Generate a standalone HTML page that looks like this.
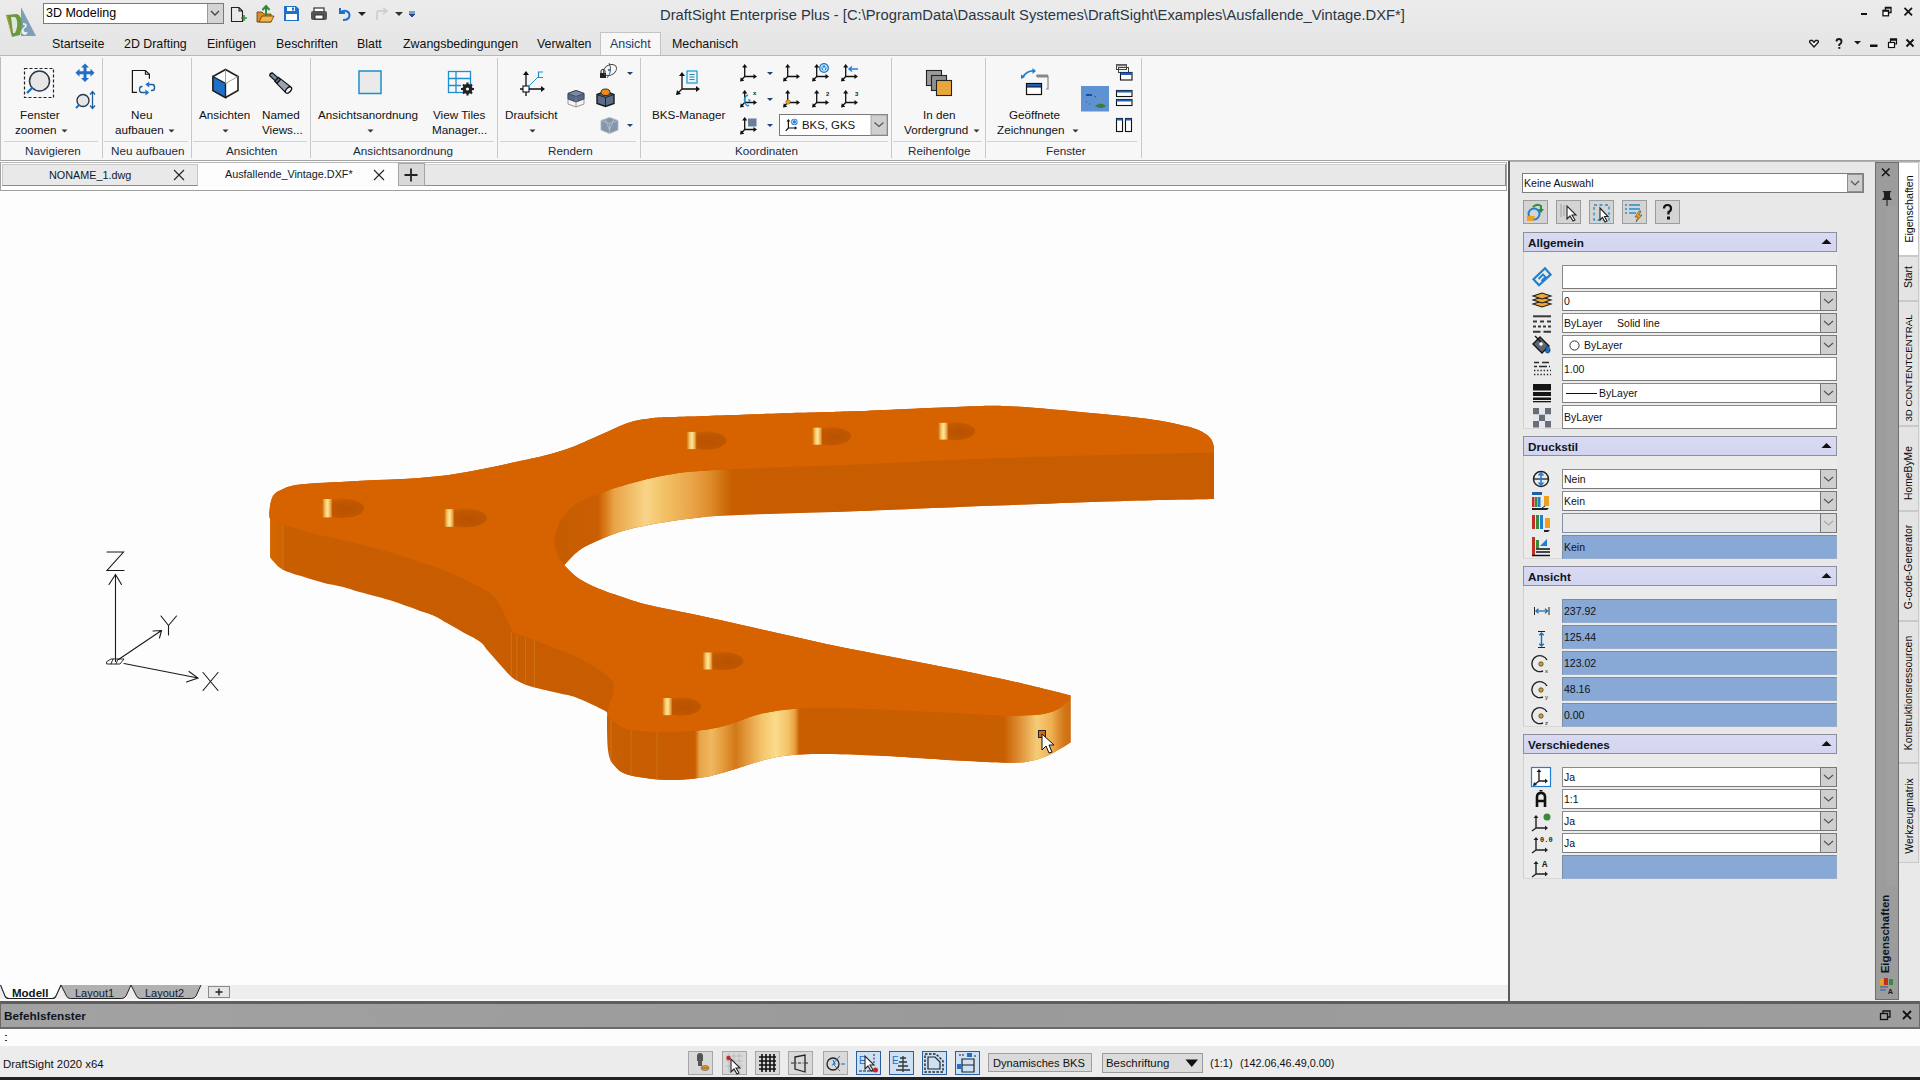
<!DOCTYPE html>
<html><head><meta charset="utf-8">
<style>
*{margin:0;padding:0;box-sizing:border-box}
html,body{width:1920px;height:1080px;overflow:hidden;background:#f0f0f0;font-family:"Liberation Sans",sans-serif;font-size:12px;color:#111}
.a{position:absolute}
.t{position:absolute;white-space:nowrap;line-height:1}
svg.a{overflow:visible}
</style></head><body>
<div class="a" style="left:0;top:0;width:1920px;height:56px;background:linear-gradient(#ececec,#e7e7e7 60%,#e4e4e4)"></div>
<!-- logo -->
<svg class="a" style="left:3px;top:5px" width="36" height="34" viewBox="0 0 36 34">
<path d="M18,2 L33,31 L18,31 Z" fill="#7f9fb5"/>
<path d="M3,10 L14,9 C20,12 20,20 17,30 L9,32 Z" fill="#6b9a3c"/>
<path d="M8,12 L12,12 C15,15 15,22 12,28 L10,28 Z" fill="#dfe6df"/>
<path d="M20,18 C24,18 25,21 22,23 C19,25 21,28 25,27 L23,30 C18,30 17,26 20,23 C23,21 22,19 20,20Z" fill="#e8f0f5"/>
<path d="M4,11 L8,26" stroke="#e0a030" stroke-width="1.2" stroke-dasharray="1.5 1.5"/>
</svg>
<!-- combo -->
<div class="a" style="left:43px;top:3px;width:181px;height:21px;background:#fff;border:1px solid #7a7a7a"></div>
<div class="t" style="left:46px;top:7px;font-size:12.5px;color:#000">3D Modeling</div>
<div class="a" style="left:207px;top:4px;width:16px;height:19px;background:#d4d4d4;border-left:1px solid #9a9a9a"></div>
<svg class="a" style="left:210px;top:10px" width="10" height="7"><path d="M1,1 L5,5 L9,1" fill="none" stroke="#444" stroke-width="1.3"/></svg>
<!-- quick access -->
<svg class="a" style="left:230px;top:6px" width="18" height="17"><path d="M1.5,1.5 H9 L12.5,5 V15.5 H1.5 Z M9,1.5 V5 H12.5" fill="none" stroke="#222" stroke-width="1.1"/><path d="M14,9 V15 M11,12 H17" stroke="#3a8a3a" stroke-width="1.6"/></svg>
<svg class="a" style="left:256px;top:4px" width="19" height="19"><path d="M1,8 H6 L8,10 H15 V18 H1 Z" fill="#e08a1e" stroke="#5a3a10" stroke-width="0.8"/><path d="M3,18 L6,12 H18 L15,18 Z" fill="#f4b547" stroke="#5a3a10" stroke-width="0.8"/><path d="M10,12 V3 M6.5,6 L10,2 L13.5,6" stroke="#2e8b3a" stroke-width="2" fill="none"/></svg>
<svg class="a" style="left:283px;top:5px" width="17" height="17"><path d="M1,1 H13 L16,4 V16 H1 Z" fill="#1f6fc8"/><rect x="4" y="2" width="8" height="4" fill="#fff"/><rect x="9" y="2.5" width="2" height="3" fill="#1f6fc8"/><rect x="3" y="9" width="11" height="6" fill="#fff"/></svg>
<svg class="a" style="left:310px;top:7px" width="18" height="14"><rect x="4" y="1" width="10" height="4" fill="#fff" stroke="#333" stroke-width="1.2"/><path d="M1,6 Q1,4 3,4 H15 Q17,4 17,6 V11 Q17,13 15,13 H3 Q1,13 1,11Z" fill="#555"/><rect x="5" y="8" width="8" height="4" fill="#fff" stroke="#333"/></svg>
<svg class="a" style="left:337px;top:6px" width="15" height="16"><path d="M3,2 V7 H8" fill="none" stroke="#1f6fc8" stroke-width="2"/><path d="M3.5,6.5 C6,4 12,4 12.5,9 C12.5,13 9,14 6,14" fill="none" stroke="#1f6fc8" stroke-width="2"/></svg>
<svg class="a" style="left:358px;top:12px" width="9" height="5"><path d="M0,0 H8 L4,4Z" fill="#222"/></svg>
<svg class="a" style="left:375px;top:7px" width="15" height="14"><path d="M2,13 V6 Q2,4 4,4 H11 M8,1 L12,4 L8,7" fill="none" stroke="#cfcfcf" stroke-width="1.8"/></svg>
<svg class="a" style="left:395px;top:12px" width="9" height="5"><path d="M0,0 H8 L4,4Z" fill="#333"/></svg>
<svg class="a" style="left:408px;top:11px" width="8" height="8"><path d="M1,1 H7 M1,3 H7 L4,6Z" fill="#1f4f8f" stroke="#1f4f8f" stroke-width="1"/></svg>
<div class="t" style="left:660px;top:8px;font-size:14.75px;color:#2a3645">DraftSight Enterprise Plus - [C:\ProgramData\Dassault Systemes\DraftSight\Examples\Ausfallende_Vintage.DXF*]</div>
<!-- window controls -->
<svg class="a" style="left:1858px;top:6px" width="60" height="14">
<rect x="3" y="7" width="6" height="2" fill="#111"/>
<path d="M27.4,4.3 V1.3 H33 V6.5 H30.5" fill="none" stroke="#111" stroke-width="1.3"/><rect x="27.4" y="1.3" width="5.6" height="1.4" fill="#111"/>
<rect x="25" y="4.3" width="5.5" height="5.5" fill="#fff" stroke="#111" stroke-width="1.3"/><rect x="25" y="4.3" width="5.5" height="1.5" fill="#111"/>
<path d="M46.5,1.8 L54,9.3 M54,1.8 L46.5,9.3" stroke="#111" stroke-width="1.7"/>
</svg>
<!-- menu tabs -->
<div class="t" style="left:52px;top:38px;font-size:12.4px;color:#111">Startseite</div>
<div class="t" style="left:124px;top:38px;font-size:12.4px;color:#111">2D Drafting</div>
<div class="t" style="left:207px;top:38px;font-size:12.4px;color:#111">Einfügen</div>
<div class="t" style="left:276px;top:38px;font-size:12.4px;color:#111">Beschriften</div>
<div class="t" style="left:357px;top:38px;font-size:12.4px;color:#111">Blatt</div>
<div class="t" style="left:403px;top:38px;font-size:12.4px;color:#111">Zwangsbedingungen</div>
<div class="t" style="left:537px;top:38px;font-size:12.4px;color:#111">Verwalten</div>
<div class="a" style="left:600px;top:32px;width:61px;height:25px;background:#f7f7f7;border:1px solid #c4c4c4;border-bottom:none"></div>
<div class="t" style="left:610px;top:38px;font-size:12.4px;color:#1a3a6a">Ansicht</div>
<div class="t" style="left:672px;top:38px;font-size:12.4px;color:#111">Mechanisch</div>
<!-- right menu icons -->
<svg class="a" style="left:1805px;top:37px" width="115" height="14">
<path d="M5,3.5 H7.5 L9,5.5 L10.5,3.5 H13 L13.5,5 L9,10 L4.5,5Z" fill="#fff" stroke="#1a1a1a" stroke-width="1.3" stroke-linejoin="round"/>
<path d="M31.5,4.5 Q31.5,2 34,2 Q36.5,2 36.5,4.5 Q36.5,6.5 34.3,7.5 V9" fill="none" stroke="#1a1a1a" stroke-width="1.9"/><rect x="33.3" y="10" width="2" height="1.8" fill="#1a1a1a"/>
<path d="M49,4 H56 L52.5,7.5Z" fill="#1a1a1a"/>
<rect x="65" y="7.5" width="7.5" height="2.5" fill="#111"/>
<rect x="83.5" y="5.5" width="6" height="5" fill="#fff" stroke="#111" stroke-width="1.2"/><path d="M85.5,5.5 V1.8 H91.5 V7 H89.5 M85.5,3.2 H91.5" fill="none" stroke="#111" stroke-width="1.2"/>
<path d="M101.5,2.5 L108.5,9.5 M108.5,2.5 L101.5,9.5" stroke="#111" stroke-width="1.9"/>
</svg>

<!-- ribbon -->
<div class="a" style="left:0;top:55px;width:1920px;height:106px;background:#f7f7f7;border-top:1px solid #b8b8b8"></div>
<div class="a" style="left:0;top:160px;width:1920px;height:1px;background:#a2a2a2"></div>
<div class="a" style="left:0;top:57px;width:1px;height:103px;background:#bdbdbd"></div>
<!-- panel separators -->
<div class="a" style="left:102px;top:58px;width:1px;height:100px;background:#c8c8c8"></div>
<div class="a" style="left:191px;top:58px;width:1px;height:100px;background:#c8c8c8"></div>
<div class="a" style="left:310px;top:58px;width:1px;height:100px;background:#c8c8c8"></div>
<div class="a" style="left:497px;top:58px;width:1px;height:100px;background:#c8c8c8"></div>
<div class="a" style="left:640px;top:58px;width:1px;height:100px;background:#c8c8c8"></div>
<div class="a" style="left:891px;top:58px;width:1px;height:100px;background:#c8c8c8"></div>
<div class="a" style="left:985px;top:58px;width:1px;height:100px;background:#c8c8c8"></div>
<div class="a" style="left:1141px;top:58px;width:1px;height:100px;background:#c8c8c8"></div>
<!-- label row lines -->
<svg class="a" style="left:0;top:141px" width="1145" height="2"><g stroke="#d2d2d2" stroke-width="1.2">
<path d="M4,0.5 H98 M104,0.5 H188 M193,0.5 H307 M312,0.5 H494 M500,0.5 H636 M642,0.5 H888 M893,0.5 H982 M987,0.5 H1137"/></g></svg>
<!-- labels -->
<div class="t" style="left:25px;top:145px;font-size:11.7px;color:#1d2b40">Navigieren</div>
<div class="t" style="left:111px;top:145px;font-size:11.7px;color:#1d2b40">Neu aufbauen</div>
<div class="t" style="left:226px;top:145px;font-size:11.7px;color:#1d2b40">Ansichten</div>
<div class="t" style="left:353px;top:145px;font-size:11.7px;color:#1d2b40">Ansichtsanordnung</div>
<div class="t" style="left:548px;top:145px;font-size:11.7px;color:#1d2b40">Rendern</div>
<div class="t" style="left:735px;top:145px;font-size:11.7px;color:#1d2b40">Koordinaten</div>
<div class="t" style="left:908px;top:145px;font-size:11.7px;color:#1d2b40">Reihenfolge</div>
<div class="t" style="left:1046px;top:145px;font-size:11.7px;color:#1d2b40">Fenster</div>
<!-- button texts -->
<div class="t" style="left:20px;top:109px;font-size:11.7px;color:#111">Fenster</div>
<div class="t" style="left:15px;top:124px;font-size:11.7px;color:#111">zoomen</div>
<div class="t" style="left:131px;top:109px;font-size:11.7px;color:#111">Neu</div>
<div class="t" style="left:115px;top:124px;font-size:11.7px;color:#111">aufbauen</div>
<div class="t" style="left:199px;top:109px;font-size:11.7px;color:#111">Ansichten</div>
<div class="t" style="left:262px;top:109px;font-size:11.7px;color:#111">Named</div>
<div class="t" style="left:262px;top:124px;font-size:11.7px;color:#111">Views...</div>
<div class="t" style="left:318px;top:109px;font-size:11.7px;color:#111">Ansichtsanordnung</div>
<div class="t" style="left:433px;top:109px;font-size:11.7px;color:#111">View Tiles</div>
<div class="t" style="left:432px;top:124px;font-size:11.7px;color:#111">Manager...</div>
<div class="t" style="left:505px;top:109px;font-size:11.7px;color:#111">Draufsicht</div>
<div class="t" style="left:652px;top:109px;font-size:11.7px;color:#111">BKS-Manager</div>
<div class="t" style="left:923px;top:109px;font-size:11.7px;color:#111">In den</div>
<div class="t" style="left:904px;top:124px;font-size:11.7px;color:#111">Vordergrund</div>
<div class="t" style="left:1009px;top:109px;font-size:11.7px;color:#111">Geöffnete</div>
<div class="t" style="left:997px;top:124px;font-size:11.7px;color:#111">Zeichnungen</div>
<!-- small dropdown arrows -->
<svg class="a" style="left:0;top:56px" width="1145" height="90"><g fill="#333">
<path d="M61.5,73.5 h6 l-3,3z"/>
<path d="M168.5,73.5 h6 l-3,3z"/>
<path d="M222.5,73.5 h6 l-3,3z"/>
<path d="M367.5,73.5 h6 l-3,3z"/>
<path d="M529.5,73.5 h6 l-3,3z"/>
<path d="M973.5,73.5 h6 l-3,3z"/>
<path d="M1072.5,73.5 h6 l-3,3z"/>
</g><g fill="#1f3f7a">
<path d="M627,16 h6 l-3,3z"/><path d="M627,68 h6 l-3,3z"/>
<path d="M767,16 h6 l-3,3z"/><path d="M767,42 h6 l-3,3z"/><path d="M767,68 h6 l-3,3z"/>
</g></svg>
<!-- ICONS -->
<svg class="a" style="left:0;top:56px" width="1145" height="90">
<!-- Fenster zoomen -->
<rect x="24.5" y="12.5" width="29" height="29" fill="none" stroke="#222" stroke-width="1.2" stroke-dasharray="3 2"/>
<circle cx="39.5" cy="25" r="10" fill="#e6e6e6" stroke="#2a3a4a" stroke-width="1.5"/>
<path d="M27,37 L32.5,31.5" stroke="#1f6fc8" stroke-width="2.4"/>
<!-- pan -->
<g fill="#1f6fc8"><path d="M85,7.5 l4,4 h-8z M85,26 l4,-4 h-8z M75.5,16.8 l4,-4 v8z M94.5,16.8 l-4,-4 v8z"/><path d="M83.5,11 h3 v11.5 h-3z M79,15.3 h12 v3 h-12z"/></g>
<!-- zoom small -->
<circle cx="83" cy="44.5" r="6" fill="#e6e6e6" stroke="#2a3a4a" stroke-width="1.4"/>
<path d="M76,52 L79,49" stroke="#1f6fc8" stroke-width="2"/>
<path d="M92.5,36 V52 M90,38.5 l2.5,-3 l2.5,3 M90,49.5 l2.5,3 l2.5,-3" stroke="#1f5f9f" stroke-width="1.3" fill="none"/>
<!-- Neu aufbauen -->
<path d="M137,36.4 H132.4 V14.5 H145.4 L149.4,18.2 V22.7" fill="none" stroke="#151515" stroke-width="1.2"/>
<path d="M145.4,14.5 V18.2 H149.4" fill="none" stroke="#151515" stroke-width="1.1"/>
<path d="M149,28.5 H152 Q154.5,28.5 154.5,31 V32 Q154.5,34.5 152,34.5 H151" fill="none" stroke="#1a5f9a" stroke-width="1.4"/>
<path d="M145.4,28.4 L149.2,25.4 V31.4Z" fill="#1f6fc8"/>
<path d="M142.5,30.5 H141.8 Q139.6,30.5 139.6,32.7 V34.3 Q139.6,36.5 141.8,36.5 H145.5" fill="none" stroke="#1a5f9a" stroke-width="1.4"/>
<path d="M149.2,36.5 L145.4,33.5 V39.5Z" fill="#1f6fc8"/>
<!-- Ansichten cube -->
<path d="M225.5,13.5 L238,20.5 V34.5 L225.5,41.5 L213,34.5 V20.5Z" fill="#fff" stroke="#222" stroke-width="1.6"/>
<path d="M213,20.5 L225.5,27.5 V41.5 L213,34.5Z" fill="#1f6fc8" stroke="#222" stroke-width="1.4"/>
<path d="M225.5,27.5 L238,20.5 M225.5,13.5 V27.5" stroke="#888" stroke-width="0.8"/>
<!-- Named views -->
<g transform="translate(270.7,18) rotate(42)">
<path d="M0.5,-2 H8 V2 H0.5 Q-1.5,0 0.5,-2Z" fill="#7d8aa0" stroke="#111" stroke-width="1.2"/>
<path d="M8,-2.7 H11 V2.7 H8Z" fill="#6d7890" stroke="#111" stroke-width="1.2"/>
<path d="M11,-3 L23,-3.8 V3.8 L11,3Z" fill="#9aa2b2" stroke="#111" stroke-width="1.2"/>
<ellipse cx="24" cy="0" rx="2.2" ry="3.8" fill="#f4f4f4" stroke="#111" stroke-width="1.3"/>
</g>
<!-- Ansichtsanordnung -->
<rect x="359" y="15" width="22" height="22.5" fill="#eaeaea" stroke="#1f8fcf" stroke-width="1.5"/>
<!-- View tiles -->
<g stroke="#1f8fcf" stroke-width="1.3" fill="none"><rect x="448.5" y="15.5" width="22" height="21"/><path d="M448.5,22.5 H470.5 M448.5,29.5 H461 M456,15.5 V36.5"/></g>
<circle cx="467.5" cy="33" r="5" fill="#222"/><circle cx="467.5" cy="33" r="1.6" fill="#f7f7f7"/>
<g stroke="#222" stroke-width="2.2"><path d="M467.5,26.5 V39.5 M461,33 H474 M463,28.5 L472,37.5 M472,28.5 L463,37.5"/></g>
<circle cx="467.5" cy="33" r="1.6" fill="#f7f7f7"/>
<!-- Draufsicht -->
<g stroke="#111" stroke-width="1.3" fill="none"><path d="M526,17 V40 M520,33 H543"/></g>
<path d="M526,15 l-3,4 h6z M545,33 l-4,-3 v6z" fill="#111"/>
<rect x="523" y="30" width="6" height="6" fill="#fff" stroke="#111" stroke-width="1.1"/>
<path d="M528,31 L538,21" stroke="#1f8fd0" stroke-width="1"/>
<path d="M543,16 H538.5 V21.5 H543" fill="none" stroke="#1f8fd0" stroke-width="1.2"/>
<!-- render cubes -->
<path d="M568,37.5 L576,34.5 L584,37.5 V48 L576,51 L568,48Z" fill="#f4f4f4" stroke="#8a8a8a" stroke-width="0.9"/>
<path d="M568,37.5 L576,34.5 L584,37.5 V43 L576,46 L568,43Z" fill="#55688a" stroke="#3a4658" stroke-width="0.9"/>
<path d="M568,37.5 L576,34.5 L584,37.5 L576,40.5Z" fill="#7a8aa5" stroke="#3a4658" stroke-width="0.8"/>
<path d="M576,40.5 V51" stroke="#8a8a8a" stroke-width="0.8"/>
<path d="M597,38.5 L605.5,35.5 L614,38.5 V47.5 L605.5,50.5 L597,47.5Z" fill="#5a6d88" stroke="#1a1a1a" stroke-width="1.4"/>
<path d="M597,38.5 L605.5,41.5 L614,38.5 M605.5,41.5 V50.5" stroke="#1a1a1a" stroke-width="0.9" fill="none"/>
<path d="M601,36.5 Q601,33 605.5,33 Q610,33 610,36.5 Q610,39.5 605.5,39.5 Q601,39.5 601,36.5Z" fill="#f08a1a" stroke="#1a1a1a" stroke-width="0.9"/>
<path d="M601,64.5 L609.5,61.5 L618,64.5 V74 L609.5,77.5 L601,74Z" fill="#8797ab" stroke="#a8b4c2" stroke-width="0.8"/>
<path d="M601,64.5 L609.5,67.5 L618,64.5 M609.5,67.5 V77.5 M605,63 L609.5,74 L614,63" fill="none" stroke="#c0cad6" stroke-width="0.6"/>
<!-- orbit lock -->
<rect x="600" y="17" width="6" height="5" fill="#222"/><path d="M601,17 V14.5 Q603,12 605,14.5 V17" fill="none" stroke="#222" stroke-width="1"/>
<ellipse cx="610" cy="14" rx="7" ry="5" fill="none" stroke="#444" stroke-width="0.9" transform="rotate(-30 610 14)"/>
<path d="M609,7 Q613,15 607,22" fill="none" stroke="#444" stroke-width="0.9"/>
<circle cx="609" cy="14" r="1.2" fill="#1f8fd0"/>
<!-- BKS manager -->
<g stroke="#111" stroke-width="1.3" fill="none"><path d="M682,19 V33 H698 M682,33 L677,38"/></g>
<path d="M682,16 l-3,4 h6z M700,33 l-4,-3 v6z M676,39 l1,-5 l4,4z" fill="#111"/>
<rect x="687" y="15" width="10" height="12" fill="#e8f4fb" stroke="#1fa0d8" stroke-width="1.3"/>
<path d="M689.5,18.5 h5 M689.5,21 h5 M689.5,23.5 h5" stroke="#1f6fa8" stroke-width="0.9"/>
</svg>

<svg class="a" style="left:0;top:0" width="1145" height="160">
<g><path d="M744.7,66 V76.5 H755 M744.7,76.5 L741,80.5" fill="none" stroke="#111" stroke-width="1.3"/><path d="M744.7,64 l-2.6,3.5 h5.2z M757,76.5 l-3.5,-2.6 v5.2z M740,81.5 l0.8,-4.3 l3.5,3.5z" fill="#111"/></g>
<g><path d="M787.7,66 V76.5 H798 M787.7,76.5 L784,80.5" fill="none" stroke="#111" stroke-width="1.3"/><path d="M787.7,64 l-2.6,3.5 h5.2z M800,76.5 l-3.5,-2.6 v5.2z M783,81.5 l0.8,-4.3 l3.5,3.5z" fill="#111"/></g>
<g><path d="M816.7,66 V76.5 H827 M816.7,76.5 L813,80.5" fill="none" stroke="#111" stroke-width="1.3"/><path d="M816.7,64 l-2.6,3.5 h5.2z M829,76.5 l-3.5,-2.6 v5.2z M812,81.5 l0.8,-4.3 l3.5,3.5z" fill="#111"/><circle cx="824" cy="68" r="5" fill="#1f7fd0"/><circle cx="824" cy="68" r="3.2" fill="none" stroke="#fff" stroke-width="1"/><path d="M822.5,66.5 L824,70 L825.5,66.5" stroke="#fff" stroke-width="1" fill="none"/></g>
<g><path d="M845.7,66 V76.5 H856 M845.7,76.5 L842,80.5" fill="none" stroke="#111" stroke-width="1.3"/><path d="M845.7,64 l-2.6,3.5 h5.2z M858,76.5 l-3.5,-2.6 v5.2z M841,81.5 l0.8,-4.3 l3.5,3.5z" fill="#111"/><path d="M849,69 H858 M852,66.5 L849,69 L852,71.5" stroke="#1f7fd0" stroke-width="1.4" fill="none"/></g>
<g><path d="M744.7,92 V102.5 H755 M744.7,102.5 L741,106.5" fill="none" stroke="#111" stroke-width="1.3"/><path d="M744.7,90 l-2.6,3.5 h5.2z M757,102.5 l-3.5,-2.6 v5.2z M740,107.5 l0.8,-4.3 l3.5,3.5z" fill="#111"/><path d="M748,95 Q743,97 745,103 Q747,107 749,105" fill="none" stroke="#1f8fd0" stroke-width="1.4"/><path d="M748,99 l3,1 l-2,2z" fill="#1f7fd0"/><text x="753" y="95" font-size="6" font-family="Liberation Sans" font-weight="bold" fill="#222">x</text></g>
<g><path d="M787.7,92 V102.5 H798 M787.7,102.5 L784,106.5" fill="none" stroke="#111" stroke-width="1.3"/><path d="M787.7,90 l-2.6,3.5 h5.2z M800,102.5 l-3.5,-2.6 v5.2z M783,107.5 l0.8,-4.3 l3.5,3.5z" fill="#111"/><circle cx="788" cy="102" r="2.2" fill="#f0a020" stroke="#8a5a10" stroke-width="0.6"/></g>
<g><path d="M816.7,92 V102.5 H827 M816.7,102.5 L813,106.5" fill="none" stroke="#111" stroke-width="1.3"/><path d="M816.7,90 l-2.6,3.5 h5.2z M829,102.5 l-3.5,-2.6 v5.2z M812,107.5 l0.8,-4.3 l3.5,3.5z" fill="#111"/><text x="826" y="96" font-size="6" font-family="Liberation Sans" font-weight="bold" fill="#222">2</text></g>
<g><path d="M845.7,92 V102.5 H856 M845.7,102.5 L842,106.5" fill="none" stroke="#111" stroke-width="1.3"/><path d="M845.7,90 l-2.6,3.5 h5.2z M858,102.5 l-3.5,-2.6 v5.2z M841,107.5 l0.8,-4.3 l3.5,3.5z" fill="#111"/><text x="855" y="96" font-size="6" font-family="Liberation Sans" font-weight="bold" fill="#222">3</text></g>
<g><path d="M744.7,119 V129.5 H755 M744.7,129.5 L741,133.5" fill="none" stroke="#111" stroke-width="1.3"/><path d="M744.7,117 l-2.6,3.5 h5.2z M757,129.5 l-3.5,-2.6 v5.2z M740,134.5 l0.8,-4.3 l3.5,3.5z" fill="#111"/><rect x="748" y="118.5" width="8.5" height="8" fill="#6a7d9a"/></g>
<rect x="779.5" y="114.5" width="108" height="21" fill="#fff" stroke="#7a7a7a"/>
<rect x="871" y="115" width="16" height="20" fill="#cfcfcf" stroke="#999" stroke-width="0.8"/>
<path d="M874.5,122.5 L879,126.5 L883.5,122.5" fill="none" stroke="#555" stroke-width="1.2"/>
<g transform="translate(785,119) scale(0.72)"><path d="M4.7,2 V12.5 H15 M4.7,12.5 L1,16.5" fill="none" stroke="#111" stroke-width="1.6"/><path d="M4.7,0 l-2.6,3.5 h5.2z M17,12.5 l-3.5,-2.6 v5.2z" fill="#111"/><circle cx="13" cy="4" r="4.5" fill="#1f7fd0"/><circle cx="13" cy="4" r="2.8" fill="none" stroke="#fff" stroke-width="1"/></g>
<rect x="926.5" y="70.5" width="15" height="15" fill="#9a9a9a" stroke="#222" stroke-width="1.1"/>
<rect x="931.5" y="75.5" width="15" height="15" fill="#8f8f8f" stroke="#222" stroke-width="1.1"/>
<rect x="936.5" y="80.5" width="15" height="15" fill="#e8a53a" stroke="#222" stroke-width="1.1"/>
<path d="M1036.5,75 V76 H1048 V89 H1046" fill="none" stroke="#888" stroke-width="1.2"/><rect x="1037" y="74.5" width="11" height="3" fill="#888"/>
<rect x="1026.5" y="83.5" width="15" height="11" fill="#fff" stroke="#111" stroke-width="1.2"/><rect x="1026.5" y="83.5" width="15" height="3.5" fill="#1f5fb8" stroke="#111" stroke-width="1"/>
<path d="M1023,77 Q1027,70 1035,71" fill="none" stroke="#1f7fd0" stroke-width="1.6"/><path d="M1036,71 l-3.5,-3 v6z M1021,79 l0,-4.5 l4,2.5z" fill="#1f7fd0"/>
<rect x="1081" y="86" width="28" height="25.5" fill="#5f92d2"/>
<rect x="1086" y="94" width="6" height="2" fill="#1a4f9f"/><path d="M1094,96 l2,1" stroke="#234" stroke-width="0.6"/><path d="M1100,98 V106" stroke="#7aa" stroke-width="0.6" stroke-dasharray="1 1"/><path d="M1095,106 Q1101,101 1106,106 Q1101,110 1095,106Z" fill="#3f7a3a"/><path d="M1086,102 h1 M1089,104 h1" stroke="#334" stroke-width="0.8"/>
<g fill="none" stroke="#444" stroke-width="1"><rect x="1116.5" y="64.5" width="10" height="5"/><rect x="1118.5" y="67.5" width="10" height="5"/></g><rect x="1116.5" y="64.5" width="10" height="1.8" fill="#777"/><rect x="1120.5" y="72.5" width="11.5" height="7.5" fill="#fff" stroke="#111" stroke-width="1.1"/><rect x="1120.5" y="72.5" width="11.5" height="2.5" fill="#1f5fb8"/>
<rect x="1116.5" y="90.5" width="15.5" height="6" fill="#fff" stroke="#111" stroke-width="1.1"/><rect x="1116.5" y="90.5" width="15.5" height="2" fill="#1f5fb8"/><rect x="1116.5" y="99.5" width="15.5" height="6" fill="#fff" stroke="#111" stroke-width="1.1"/><rect x="1116.5" y="99.5" width="15.5" height="2" fill="#1f5fb8"/>
<rect x="1116.5" y="118.5" width="6" height="13" fill="#fff" stroke="#111" stroke-width="1.1"/><rect x="1116.5" y="118.5" width="6" height="2" fill="#1f5fb8"/><rect x="1125.5" y="118.5" width="6" height="13" fill="#fff" stroke="#111" stroke-width="1.1"/><rect x="1125.5" y="118.5" width="6" height="2" fill="#1f5fb8"/>
</svg>
<div class="t" style="left:802px;top:119.5px;font-size:11.4px;color:#111">BKS, GKS</div>
<!-- doc tabs strip -->
<div class="a" style="left:0;top:161px;width:1508px;height:30px;background:#fff"></div>
<div class="a" style="left:0;top:162px;width:1507px;height:29px;border:1px solid #a0a0a0;border-top-color:#b8b8b8;background:#fff"></div>
<div class="a" style="left:2px;top:164px;width:1504px;height:22px;background:#e8e8e9;border:1px solid #c0c0c0;border-bottom:1px solid #8c8c8c;border-right:1px solid #8a8a8a;border-top:1px solid #d0d0d0"></div>
<div class="a" style="left:2px;top:164px;width:196px;height:22px;background:#e9e9ea;border:1px solid #c6c6c6;border-bottom-color:#8a8a8a"></div>
<div class="a" style="left:198px;top:163px;width:200px;height:24px;background:#fdfdfd"></div>
<div class="a" style="left:398px;top:163px;width:27px;height:23px;background:#d9d9d9;border:1px solid #a5a5a5"></div>
<div class="t" style="left:49px;top:170px;font-size:10.8px;color:#0f1a2a">NONAME_1.dwg</div>
<div class="t" style="left:225px;top:169px;font-size:10.8px;color:#0f1a2a">Ausfallende_Vintage.DXF*</div>
<svg class="a" style="left:173px;top:169px" width="12" height="12"><path d="M1,1 L11,11 M11,1 L1,11" stroke="#222" stroke-width="1.1"/></svg>
<svg class="a" style="left:373px;top:169px" width="12" height="12"><path d="M1,1 L11,11 M11,1 L1,11" stroke="#222" stroke-width="1.1"/></svg>
<svg class="a" style="left:403px;top:167px" width="16" height="16"><path d="M8,1.5 V14.5 M1.5,8 H14.5" stroke="#222" stroke-width="1.8"/></svg>

<div class="a" style="left:0;top:191px;width:1508px;height:794px;background:#fdfdfd"></div>
<svg class="a" style="left:0;top:0" width="1920" height="1080" viewBox="0 0 1920 1080">
<defs>
<linearGradient id="gU" x1="550" y1="0" x2="870" y2="0" gradientUnits="userSpaceOnUse">
<stop offset="0" stop-color="#c65c00"/><stop offset="0.15" stop-color="#c95e02"/><stop offset="0.18" stop-color="#dc8424"/><stop offset="0.2" stop-color="#e8a448"/><stop offset="0.25" stop-color="#f0bc64"/><stop offset="0.3" stop-color="#f8d488"/><stop offset="0.36" stop-color="#f2c064"/><stop offset="0.44" stop-color="#eaa54a"/><stop offset="0.5" stop-color="#de8c2c"/><stop offset="0.55" stop-color="#cc6a0a"/><stop offset="0.57" stop-color="#c85e00"/><stop offset="1" stop-color="#c75d00"/></linearGradient>
<linearGradient id="gL" x1="600" y1="0" x2="1075" y2="0" gradientUnits="userSpaceOnUse">
<stop offset="0" stop-color="#ca6002"/><stop offset="0.05" stop-color="#c75d00"/><stop offset="0.2" stop-color="#c85e00"/><stop offset="0.21" stop-color="#e8a448"/><stop offset="0.235" stop-color="#f0b860"/><stop offset="0.26" stop-color="#e49a3c"/><stop offset="0.285" stop-color="#d27818"/><stop offset="0.31" stop-color="#e49a40"/><stop offset="0.34" stop-color="#f4c468"/><stop offset="0.37" stop-color="#fbdc8c"/><stop offset="0.395" stop-color="#f4c468"/><stop offset="0.41" stop-color="#e8a040"/><stop offset="0.42" stop-color="#c85e00"/><stop offset="0.85" stop-color="#c85e00"/><stop offset="0.88" stop-color="#dc8a30"/><stop offset="0.92" stop-color="#f6cc78"/><stop offset="0.95" stop-color="#eeb052"/><stop offset="0.975" stop-color="#d47a1c"/><stop offset="1" stop-color="#ca6406"/></linearGradient>
<linearGradient id="gW" x1="270" y1="0" x2="1214" y2="0" gradientUnits="userSpaceOnUse">
<stop offset="0" stop-color="#d46800"/><stop offset="0.012" stop-color="#cf6400"/><stop offset="0.016" stop-color="#c85e00"/><stop offset="0.3" stop-color="#c75d00"/><stop offset="0.6" stop-color="#c85e00"/><stop offset="1" stop-color="#cb6100"/></linearGradient>
<linearGradient id="gB" x1="0" y1="0" x2="1" y2="0">
<stop offset="0" stop-color="#d87410"/><stop offset="0.3" stop-color="#f6c868"/><stop offset="0.55" stop-color="#fde7a0"/><stop offset="0.8" stop-color="#efb050"/><stop offset="1" stop-color="#d27010"/></linearGradient>
<radialGradient id="gE" cx="0.62" cy="0.55" r="0.62"><stop offset="0" stop-color="#b95200"/><stop offset="0.65" stop-color="#c05700"/><stop offset="1" stop-color="#cc6000"/></radialGradient>
</defs>
<path d="M270.0,506.0 C270.0,506.0 271.2,498.7 273.0,496.0 C274.8,493.3 276.5,491.9 281.0,490.0 C285.5,488.1 287.3,486.0 300.0,484.5 C312.7,483.0 333.7,482.4 357.0,481.0 C380.3,479.6 412.8,479.3 440.0,476.0 C467.2,472.7 499.1,465.4 520.0,461.0 C540.9,456.6 552.3,453.7 565.6,449.4 C578.9,445.1 589.7,439.4 600.0,435.0 C610.3,430.6 619.2,425.8 627.5,423.0 C635.8,420.2 640.0,419.5 650.0,418.4 C660.0,417.3 662.5,417.5 687.5,416.6 C712.5,415.7 771.2,413.7 800.0,412.8 C828.8,411.9 832.3,412.1 860.0,411.0 C887.7,409.9 940.3,407.2 966.0,406.4 C991.7,405.6 993.2,405.3 1014.0,406.4 C1034.8,407.5 1068.5,410.9 1091.0,413.0 C1113.5,415.1 1132.9,416.7 1149.0,419.0 C1165.1,421.3 1178.3,424.3 1187.5,426.6 C1196.7,428.9 1200.1,430.9 1204.0,433.0 C1207.9,435.1 1209.3,436.7 1211.0,439.0 C1212.7,441.3 1214.0,447.0 1214.0,447.0 C1214.0,447.0 1214.0,499.0 1214.0,499.0 C1214.0,499.0 1166.2,499.7 1129.7,500.8 C1093.2,501.9 1040.0,503.9 995.0,505.6 C950.0,507.3 898.0,509.6 860.0,511.0 C822.0,512.4 793.7,512.9 767.0,514.0 C740.3,515.1 722.3,515.1 700.0,517.5 C677.7,519.9 651.0,524.0 633.0,528.3 C615.0,532.6 601.5,539.2 592.0,543.3 C582.5,547.4 580.6,549.4 576.0,553.0 C571.4,556.6 564.4,565.2 564.4,565.2 C564.4,565.2 572.6,574.3 578.7,578.4 C584.8,582.5 594.0,586.5 601.1,589.6 C608.2,592.7 613.2,594.0 621.5,596.7 C629.8,599.4 634.6,601.7 651.0,605.6 C667.4,609.5 691.2,613.7 720.0,620.0 C748.8,626.3 789.2,636.1 824.0,643.4 C858.8,650.7 898.0,657.9 928.5,664.0 C959.0,670.1 983.0,674.8 1006.7,680.0 C1030.4,685.2 1070.5,695.5 1070.5,695.5 C1070.5,695.5 1070.5,742.4 1070.5,742.4 C1070.5,742.4 1062.1,747.7 1058.0,750.0 C1053.9,752.3 1052.1,754.3 1045.7,756.4 C1039.3,758.5 1032.7,761.7 1019.7,762.5 C1006.7,763.3 991.5,762.2 967.6,761.0 C943.7,759.8 902.5,756.6 876.5,755.4 C850.5,754.2 828.8,753.6 811.4,754.0 C794.0,754.4 785.4,755.4 772.3,758.0 C759.2,760.6 744.7,766.4 733.0,769.7 C721.3,773.0 712.8,775.9 702.0,777.6 C691.2,779.3 680.2,780.4 668.0,780.0 C655.8,779.6 638.0,777.5 629.0,775.0 C620.0,772.5 617.3,768.8 614.0,765.0 C610.7,761.2 610.0,760.2 609.0,752.0 C608.0,743.8 608.0,716.0 608.0,716.0 C608.0,716.0 609.7,713.7 604.4,710.6 C599.1,707.5 583.4,700.4 576.0,697.5 C568.6,694.6 567.2,695.2 560.0,693.5 C552.8,691.8 539.5,689.0 532.6,687.0 C525.7,685.0 522.4,683.4 518.7,681.5 C515.0,679.6 513.5,678.7 510.4,675.9 C507.3,673.1 503.9,668.9 500.2,664.8 C496.5,660.6 491.5,654.9 488.1,651.0 C484.7,647.1 484.4,645.0 480.0,641.7 C475.6,638.5 467.1,634.5 461.7,631.5 C456.3,628.5 452.4,626.2 447.8,623.6 C443.2,621.0 438.7,617.9 433.9,615.7 C429.1,613.5 426.3,613.0 418.9,610.4 C411.5,607.8 399.2,603.1 389.3,600.0 C379.4,596.9 367.5,594.1 359.6,591.9 C351.7,589.7 348.1,588.2 342.0,586.7 C335.9,585.2 329.7,584.4 323.1,582.7 C316.6,581.0 309.5,578.8 302.7,576.6 C295.9,574.4 287.3,572.0 282.4,569.4 C277.5,566.8 275.3,563.4 273.2,561.3 C271.1,559.2 270.0,557.0 270.0,557.0 C270.0,557.0 270.0,506.0 270.0,506.0Z" fill="url(#gW)"/>
<path d="M1214.0,452.6 C1214.0,452.6 1057.3,456.1 1000.0,458.0 C942.7,459.9 917.2,462.0 870.0,464.0 C822.8,466.0 750.6,468.2 716.7,470.0 C682.8,471.8 682.0,472.5 666.7,475.0 C651.4,477.5 636.1,481.9 625.0,485.0 C613.9,488.1 606.8,490.8 600.0,493.3 C593.2,495.8 588.4,497.9 584.0,500.0 C579.6,502.1 577.5,502.6 573.6,506.0 C569.7,509.4 563.6,514.6 560.4,520.4 C557.2,526.2 554.8,535.1 554.3,540.7 C553.8,546.3 555.6,549.9 557.3,554.0 C559.0,558.1 564.4,565.2 564.4,565.2 C564.4,565.2 571.4,556.6 576.0,553.0 C580.6,549.4 582.5,547.4 592.0,543.3 C601.5,539.2 615.0,532.6 633.0,528.3 C651.0,524.0 677.7,519.9 700.0,517.5 C722.3,515.1 740.3,515.1 767.0,514.0 C793.7,512.9 822.0,512.4 860.0,511.0 C898.0,509.6 950.0,507.3 995.0,505.6 C1040.0,503.9 1093.2,501.9 1129.7,500.8 C1166.2,499.7 1214.0,499.0 1214.0,499.0 C1214.0,499.0 1214.0,452.6 1214.0,452.6Z" fill="url(#gU)"/>
<path d="M1070.5,698.0 C1070.5,698.0 1065.1,705.2 1060.0,708.0 C1054.9,710.8 1050.0,713.2 1040.0,714.5 C1030.0,715.8 1014.2,715.8 1000.0,715.5 C985.8,715.2 974.6,714.0 954.6,713.0 C934.6,712.0 901.7,710.4 880.0,709.5 C858.3,708.6 838.5,707.8 824.4,707.7 C810.3,707.6 806.1,707.7 795.5,708.7 C784.9,709.7 771.8,711.2 761.0,713.8 C750.2,716.3 739.5,721.4 730.5,724.0 C721.5,726.6 717.4,728.1 707.0,729.4 C696.6,730.7 681.0,732.0 668.0,732.0 C655.0,732.0 638.3,731.4 629.0,729.4 C619.7,727.4 615.7,722.6 612.0,720.0 C608.3,717.4 607.0,714.0 607.0,714.0 C607.0,714.0 606.8,741.5 608.0,750.0 C609.2,758.5 610.5,760.8 614.0,765.0 C617.5,769.2 620.0,772.5 629.0,775.0 C638.0,777.5 655.8,779.6 668.0,780.0 C680.2,780.4 691.2,779.3 702.0,777.6 C712.8,775.9 721.3,773.0 733.0,769.7 C744.7,766.4 759.2,760.6 772.3,758.0 C785.4,755.4 794.0,754.4 811.4,754.0 C828.8,753.6 850.5,754.2 876.5,755.4 C902.5,756.6 943.7,759.8 967.6,761.0 C991.5,762.2 1006.7,763.3 1019.7,762.5 C1032.7,761.7 1039.3,758.5 1045.7,756.4 C1052.1,754.3 1053.9,752.3 1058.0,750.0 C1062.1,747.7 1070.5,742.4 1070.5,742.4 C1070.5,742.4 1070.5,698.0 1070.5,698.0Z" fill="url(#gL)"/>
<path d="M270.0,506.0 C270.0,506.0 271.2,498.7 273.0,496.0 C274.8,493.3 276.5,491.9 281.0,490.0 C285.5,488.1 287.3,486.0 300.0,484.5 C312.7,483.0 333.7,482.4 357.0,481.0 C380.3,479.6 412.8,479.3 440.0,476.0 C467.2,472.7 499.1,465.4 520.0,461.0 C540.9,456.6 552.3,453.7 565.6,449.4 C578.9,445.1 589.7,439.4 600.0,435.0 C610.3,430.6 619.2,425.8 627.5,423.0 C635.8,420.2 640.0,419.5 650.0,418.4 C660.0,417.3 662.5,417.5 687.5,416.6 C712.5,415.7 771.2,413.7 800.0,412.8 C828.8,411.9 832.3,412.1 860.0,411.0 C887.7,409.9 940.3,407.2 966.0,406.4 C991.7,405.6 993.2,405.3 1014.0,406.4 C1034.8,407.5 1068.5,410.9 1091.0,413.0 C1113.5,415.1 1132.9,416.7 1149.0,419.0 C1165.1,421.3 1178.3,424.3 1187.5,426.6 C1196.7,428.9 1200.1,430.9 1204.0,433.0 C1207.9,435.1 1209.3,436.7 1211.0,439.0 C1212.7,441.3 1214.0,447.0 1214.0,447.0 C1214.0,447.0 1214.0,452.6 1214.0,452.6 C1214.0,452.6 1057.3,456.1 1000.0,458.0 C942.7,459.9 917.2,462.0 870.0,464.0 C822.8,466.0 750.6,468.2 716.7,470.0 C682.8,471.8 682.0,472.5 666.7,475.0 C651.4,477.5 636.1,481.9 625.0,485.0 C613.9,488.1 606.8,490.8 600.0,493.3 C593.2,495.8 588.4,497.9 584.0,500.0 C579.6,502.1 577.5,502.6 573.6,506.0 C569.7,509.4 563.6,514.6 560.4,520.4 C557.2,526.2 554.8,535.1 554.3,540.7 C553.8,546.3 555.6,549.9 557.3,554.0 C559.0,558.1 560.8,561.1 564.4,565.2 C568.0,569.3 572.6,574.3 578.7,578.4 C584.8,582.5 594.0,586.5 601.1,589.6 C608.2,592.7 613.2,594.0 621.5,596.7 C629.8,599.4 634.6,601.7 651.0,605.6 C667.4,609.5 691.2,613.7 720.0,620.0 C748.8,626.3 789.2,636.1 824.0,643.4 C858.8,650.7 898.0,657.9 928.5,664.0 C959.0,670.1 983.0,674.8 1006.7,680.0 C1030.4,685.2 1070.5,695.5 1070.5,695.5 C1070.5,695.5 1070.5,698.0 1070.5,698.0 C1070.5,698.0 1065.1,705.2 1060.0,708.0 C1054.9,710.8 1050.0,713.2 1040.0,714.5 C1030.0,715.8 1014.2,715.8 1000.0,715.5 C985.8,715.2 974.6,714.0 954.6,713.0 C934.6,712.0 901.7,710.4 880.0,709.5 C858.3,708.6 838.5,707.8 824.4,707.7 C810.3,707.6 806.1,707.7 795.5,708.7 C784.9,709.7 771.8,711.2 761.0,713.8 C750.2,716.3 739.5,721.4 730.5,724.0 C721.5,726.6 717.4,728.1 707.0,729.4 C696.6,730.7 681.0,732.0 668.0,732.0 C655.0,732.0 638.3,731.4 629.0,729.4 C619.7,727.4 615.7,722.6 612.0,720.0 C608.3,717.4 607.0,714.0 607.0,714.0 C607.0,714.0 608.0,708.7 609.0,705.0 C610.0,701.3 612.7,696.3 613.0,692.0 C613.3,687.7 616.2,684.5 610.8,679.0 C605.4,673.5 593.6,665.5 580.8,659.0 C568.0,652.5 545.3,644.3 534.0,640.0 C522.7,635.7 513.0,633.0 513.0,633.0 C513.0,633.0 510.3,626.8 508.0,622.0 C505.7,617.2 502.5,609.1 499.0,604.0 C495.5,598.9 495.2,596.5 487.0,591.3 C478.8,586.0 462.1,577.8 449.6,572.5 C437.1,567.2 424.5,563.5 412.0,559.4 C399.5,555.3 386.2,551.2 374.5,548.0 C362.8,544.8 350.6,541.9 342.0,539.9 C333.4,537.9 329.7,537.3 323.1,535.8 C316.6,534.3 309.5,532.6 302.7,530.7 C295.9,528.8 287.8,526.6 282.4,524.6 C276.9,522.6 272.1,522.1 270.0,519.0 C267.9,515.9 270.0,506.0 270.0,506.0Z" fill="#d76200"/>
<g stroke="#d88a30" stroke-width="0.8" opacity="0.6"><path d="M283,525 V569"/><path d="M270.5,519 V557" stroke="#d77020"/><path d="M511.3,632 V676 M516.9,635 V680 M525.6,638 V684 M534.4,640 V687"/><path d="M631,730 V775 M657,732 V779 M611,720 V762"/></g>
<clipPath id="hc0"><ellipse cx="341.5" cy="508.2" rx="22.5" ry="9.8"/></clipPath>
<ellipse cx="341.5" cy="508.2" rx="22.5" ry="9.8" fill="url(#gE)"/>
<g clip-path="url(#hc0)"><rect x="319.0" y="498.4" width="4" height="19.6" fill="#d06a08"/></g><rect x="322.5" y="499.0" width="9.5" height="18.4" fill="url(#gB)"/>
<clipPath id="hc1"><ellipse cx="464" cy="518" rx="23" ry="9.4"/></clipPath>
<ellipse cx="464" cy="518" rx="23" ry="9.4" fill="url(#gE)"/>
<g clip-path="url(#hc1)"><rect x="441" y="508.6" width="4" height="18.8" fill="#d06a08"/></g><rect x="444.5" y="509.2" width="9.5" height="17.6" fill="url(#gB)"/>
<clipPath id="hc2"><ellipse cx="705" cy="440.5" rx="21.6" ry="9.2"/></clipPath>
<ellipse cx="705" cy="440.5" rx="21.6" ry="9.2" fill="url(#gE)"/>
<g clip-path="url(#hc2)"><rect x="683.4" y="431.3" width="4" height="18.4" fill="#d06a08"/></g><rect x="686.9" y="431.9" width="9.5" height="17.2" fill="url(#gB)"/>
<clipPath id="hc3"><ellipse cx="830" cy="436.2" rx="21" ry="9.1"/></clipPath>
<ellipse cx="830" cy="436.2" rx="21" ry="9.1" fill="url(#gE)"/>
<g clip-path="url(#hc3)"><rect x="809" y="427.09999999999997" width="4" height="18.2" fill="#d06a08"/></g><rect x="812.5" y="427.7" width="9.5" height="17.0" fill="url(#gB)"/>
<clipPath id="hc4"><ellipse cx="955" cy="431.2" rx="20" ry="9"/></clipPath>
<ellipse cx="955" cy="431.2" rx="20" ry="9" fill="url(#gE)"/>
<g clip-path="url(#hc4)"><rect x="935" y="422.2" width="4" height="18" fill="#d06a08"/></g><rect x="938.5" y="422.8" width="9.5" height="16.8" fill="url(#gB)"/>
<clipPath id="hc5"><ellipse cx="721.5" cy="661" rx="22" ry="9.1"/></clipPath>
<ellipse cx="721.5" cy="661" rx="22" ry="9.1" fill="url(#gE)"/>
<g clip-path="url(#hc5)"><rect x="699.5" y="651.9" width="4" height="18.2" fill="#d06a08"/></g><rect x="703.0" y="652.5" width="9.5" height="17.0" fill="url(#gB)"/>
<clipPath id="hc6"><ellipse cx="680" cy="706.6" rx="21" ry="9.2"/></clipPath>
<ellipse cx="680" cy="706.6" rx="21" ry="9.2" fill="url(#gE)"/>
<g clip-path="url(#hc6)"><rect x="659" y="697.4" width="4" height="18.4" fill="#d06a08"/></g><rect x="662.5" y="698.0" width="9.5" height="17.2" fill="url(#gB)"/>
</svg>
<svg class="a" style="left:1037px;top:729px" width="20" height="26"><rect x="1.5" y="1.5" width="7" height="7" fill="#c86a20" stroke="#222" stroke-width="1"/><path d="M5,5 L5,21 L9,17 L12,24 L15,23 L12,16 L17,16Z" fill="#fff" stroke="#111" stroke-width="1"/></svg>
<svg class="a" style="left:0;top:0" width="240" height="720" viewBox="0 0 240 720">
<g stroke="#1a1a1a" stroke-width="1.1" fill="none" stroke-linecap="round">
<path d="M107,552 H123.5 L107,570.5 H124"/>
<path d="M115.5,575 V661.5 M109,584.5 L115.5,574.5 L121.5,584.5"/>
<path d="M118.5,659.5 L161.5,630.5 M153,631 L161.5,630.5 L159.5,638"/>
<path d="M161,616 L168.5,625.5 L176.5,616 M168.5,625.5 V635"/>
<path d="M124,663.5 L198,678 M189,671.5 L198,678 L186.5,682"/>
<path d="M203,672.5 L218,690.5 M218,672.5 L203,690.5"/>
<path d="M107,661.5 L111,659 H124 L120,664 H107Z M113,659 L111,664 M118,659 L116,664" stroke-width="0.9"/>
</g>
</svg>

<div class="a" style="left:1508px;top:161px;width:412px;height:840px;background:#e8e8e8"></div>
<div class="a" style="left:1508px;top:161px;width:2px;height:840px;background:#5a5a5a"></div>
<div class="a" style="left:1510px;top:161px;width:410px;height:1px;background:#b0b0b0"></div>
<div class="a" style="left:1522px;top:173px;width:342px;height:20px;background:#fff;border:1px solid #7d7d7d"></div>
<div class="a" style="left:1847px;top:174px;width:16px;height:18px;background:#cdcdcd;border:1px solid #8f8f8f"></div>
<svg class="a" style="left:1850px;top:180px" width="10" height="7"><path d="M1,1 L5,5 L9,1" fill="none" stroke="#555" stroke-width="1.2"/></svg>
<div class="t" style="left:1524px;top:178px;font-size:10.6px;color:#111">Keine Auswahl</div>
<div class="a" style="left:1523px;top:200px;width:25px;height:24px;background:#d4d4d4;border:1px solid #9c9c9c"></div>
<div class="a" style="left:1556px;top:200px;width:25px;height:24px;background:#d4d4d4;border:1px solid #9c9c9c"></div>
<div class="a" style="left:1589px;top:200px;width:25px;height:24px;background:#d4d4d4;border:1px solid #9c9c9c"></div>
<div class="a" style="left:1622px;top:200px;width:25px;height:24px;background:#d4d4d4;border:1px solid #9c9c9c"></div>
<div class="a" style="left:1655px;top:200px;width:25px;height:24px;background:#d4d4d4;border:1px solid #9c9c9c"></div>
<svg class="a" style="left:1523px;top:200px" width="160" height="24">
<circle cx="11" cy="14" r="5.5" fill="none" stroke="#1f7fd0" stroke-width="2"/>
<path d="M4,16 h8 l-2,5 h-6z" fill="#f0a020"/>
<path d="M10,7 Q14,3 18,6 L18,9" fill="none" stroke="#2e8b3a" stroke-width="2"/><path d="M15,9 h6 l-3,4z" fill="#2e8b3a"/>
<g transform="translate(33,0)"><path d="M5,4 V17 M8,5 V16" stroke="#bbb" stroke-width="2"/><path d="M11,6 L11,19 L14,16 L17,21 L19,20 L16,15 L20,15Z" fill="#fff" stroke="#222" stroke-width="1.1"/></g>
<g transform="translate(66,0)"><rect x="5" y="5" width="15" height="15" fill="none" stroke="#1f8fd0" stroke-width="1.3" stroke-dasharray="3 2.5"/><path d="M11,8 L11,20 L13.5,17.5 L16,22 L18,21 L15.5,16.5 L19,16.5Z" fill="#fff" stroke="#222" stroke-width="1.1"/></g>
<g transform="translate(99,0)"><path d="M3,5 h2 M7,5 h11 M3,9 h2 M7,9 h11 M3,13 h2 M7,13 h7" stroke="#1f8fd0" stroke-width="1.3"/><path d="M17,11 L13,17 H16 L14,22 L20,15 H17 L19,11Z" fill="#f0a020" stroke="#444" stroke-width="0.6"/></g>
<g transform="translate(132,0)"><path d="M9,8.5 Q9,5 12.5,5 Q16,5 16,8.5 Q16,11 13.5,12 V14.5" fill="none" stroke="#111" stroke-width="2.2"/><rect x="12" y="16.5" width="3" height="3" fill="#111"/></g>
</svg>
<div class="a" style="left:1523px;top:232px;width:314px;height:20px;background:linear-gradient(#d9dbf3,#d3d5f0);border:1px solid #8e8e9e"></div>
<div class="t" style="left:1528px;top:237px;font-size:11.7px;font-weight:bold;color:#0d1522">Allgemein</div>
<svg class="a" style="left:1821px;top:238px" width="11" height="7"><path d="M0.5,6 L5.5,1 L10.5,6Z" fill="#111"/></svg>
<div class="a" style="left:1523px;top:252px;width:314px;height:177px;background:#ebebeb;border-left:1px solid #cfcfcf;border-bottom:1px solid #d8d8d8"></div>
<div class="a" style="left:1562px;top:265px;width:275px;height:24px;background:#fff;border:1px solid #8a8a8a;border-bottom-color:#7a7a7a"></div>
<div class="a" style="left:1562px;top:291px;width:275px;height:20px;background:#fff;border:1px solid #8a8a8a;border-bottom-color:#7a7a7a"></div>
<div class="a" style="left:1820px;top:291px;width:17px;height:20px;background:#cfcfcf;border:1px solid #777"></div>
<svg class="a" style="left:1823px;top:298px" width="11" height="7"><path d="M1,1 L5.5,5 L10,1" fill="none" stroke="#555" stroke-width="1.2"/></svg>
<div class="t" style="left:1564px;top:296.3px;font-size:10.5px;color:#111">0</div>
<div class="a" style="left:1562px;top:313px;width:275px;height:20px;background:#fff;border:1px solid #8a8a8a;border-bottom-color:#7a7a7a"></div>
<div class="a" style="left:1820px;top:313px;width:17px;height:20px;background:#cfcfcf;border:1px solid #777"></div>
<svg class="a" style="left:1823px;top:320px" width="11" height="7"><path d="M1,1 L5.5,5 L10,1" fill="none" stroke="#555" stroke-width="1.2"/></svg>
<div class="t" style="left:1564px;top:318.3px;font-size:10.5px;color:#111">ByLayer&nbsp;&nbsp;&nbsp;&nbsp;&nbsp;Solid line</div>
<div class="a" style="left:1562px;top:335px;width:275px;height:20px;background:#fff;border:1px solid #8a8a8a;border-bottom-color:#7a7a7a"></div>
<div class="a" style="left:1820px;top:335px;width:17px;height:20px;background:#cfcfcf;border:1px solid #777"></div>
<svg class="a" style="left:1823px;top:342px" width="11" height="7"><path d="M1,1 L5.5,5 L10,1" fill="none" stroke="#555" stroke-width="1.2"/></svg>
<div class="a" style="left:1562px;top:357px;width:275px;height:24px;background:#fff;border:1px solid #8a8a8a;border-bottom-color:#7a7a7a"></div>
<div class="t" style="left:1564px;top:364.3px;font-size:10.5px;color:#111">1.00</div>
<div class="a" style="left:1562px;top:383px;width:275px;height:20px;background:#fff;border:1px solid #8a8a8a;border-bottom-color:#7a7a7a"></div>
<div class="a" style="left:1820px;top:383px;width:17px;height:20px;background:#cfcfcf;border:1px solid #777"></div>
<svg class="a" style="left:1823px;top:390px" width="11" height="7"><path d="M1,1 L5.5,5 L10,1" fill="none" stroke="#555" stroke-width="1.2"/></svg>
<div class="a" style="left:1562px;top:405px;width:275px;height:24px;background:#fff;border:1px solid #8a8a8a;border-bottom-color:#7a7a7a"></div>
<div class="t" style="left:1564px;top:412.3px;font-size:10.5px;color:#111">ByLayer</div>
<svg class="a" style="left:1569px;top:340px" width="11" height="11"><circle cx="5.5" cy="5.5" r="4.6" fill="none" stroke="#333" stroke-width="1"/></svg>
<div class="t" style="left:1584px;top:340.3px;font-size:10.5px;color:#111">ByLayer</div>
<div class="a" style="left:1566px;top:393px;width:31px;height:1px;background:#111"></div>
<div class="t" style="left:1599px;top:388.3px;font-size:10.5px;color:#111">ByLayer</div>
<div class="a" style="left:1523px;top:436px;width:314px;height:20px;background:linear-gradient(#d9dbf3,#d3d5f0);border:1px solid #8e8e9e"></div>
<div class="t" style="left:1528px;top:441px;font-size:11.7px;font-weight:bold;color:#0d1522">Druckstil</div>
<svg class="a" style="left:1821px;top:442px" width="11" height="7"><path d="M0.5,6 L5.5,1 L10.5,6Z" fill="#111"/></svg>
<div class="a" style="left:1523px;top:456px;width:314px;height:103px;background:#ebebeb;border-left:1px solid #cfcfcf;border-bottom:1px solid #d8d8d8"></div>
<div class="a" style="left:1562px;top:469px;width:275px;height:20px;background:#fff;border:1px solid #8a8a8a;border-bottom-color:#7a7a7a"></div>
<div class="a" style="left:1820px;top:469px;width:17px;height:20px;background:#cfcfcf;border:1px solid #777"></div>
<svg class="a" style="left:1823px;top:476px" width="11" height="7"><path d="M1,1 L5.5,5 L10,1" fill="none" stroke="#555" stroke-width="1.2"/></svg>
<div class="t" style="left:1564px;top:474.3px;font-size:10.5px;color:#111">Nein</div>
<div class="a" style="left:1562px;top:491px;width:275px;height:20px;background:#fff;border:1px solid #8a8a8a;border-bottom-color:#7a7a7a"></div>
<div class="a" style="left:1820px;top:491px;width:17px;height:20px;background:#cfcfcf;border:1px solid #777"></div>
<svg class="a" style="left:1823px;top:498px" width="11" height="7"><path d="M1,1 L5.5,5 L10,1" fill="none" stroke="#555" stroke-width="1.2"/></svg>
<div class="t" style="left:1564px;top:496.3px;font-size:10.5px;color:#111">Kein</div>
<div class="a" style="left:1562px;top:513px;width:275px;height:20px;background:#e9e9ec;border:1px solid #7f8fa8"></div>
<div class="a" style="left:1820px;top:513px;width:17px;height:20px;background:#d8d8d8;border:1px solid #777"></div>
<svg class="a" style="left:1823px;top:520px" width="11" height="7"><path d="M1,1 L5.5,5 L10,1" fill="none" stroke="#aaa" stroke-width="1.2"/></svg>
<div class="a" style="left:1562px;top:535px;width:275px;height:24px;background:#88a8d6;border-top:1px solid #7a8aa0;border-left:1px solid #7d8ea6;border-right:1px solid #9aaac0;border-bottom:1px solid #9aaed0"></div>
<div class="t" style="left:1564px;top:542.3px;font-size:10.5px;color:#111">Kein</div>
<div class="a" style="left:1523px;top:566px;width:314px;height:20px;background:linear-gradient(#d9dbf3,#d3d5f0);border:1px solid #8e8e9e"></div>
<div class="t" style="left:1528px;top:571px;font-size:11.7px;font-weight:bold;color:#0d1522">Ansicht</div>
<svg class="a" style="left:1821px;top:572px" width="11" height="7"><path d="M0.5,6 L5.5,1 L10.5,6Z" fill="#111"/></svg>
<div class="a" style="left:1523px;top:586px;width:314px;height:141px;background:#ebebeb;border-left:1px solid #cfcfcf;border-bottom:1px solid #d8d8d8"></div>
<div class="a" style="left:1562px;top:599px;width:275px;height:24px;background:#88a8d6;border-top:1px solid #7a8aa0;border-left:1px solid #7d8ea6;border-right:1px solid #9aaac0;border-bottom:1px solid #9aaed0"></div>
<div class="t" style="left:1564px;top:606.3px;font-size:10.5px;color:#111">237.92</div>
<div class="a" style="left:1562px;top:625px;width:275px;height:24px;background:#88a8d6;border-top:1px solid #7a8aa0;border-left:1px solid #7d8ea6;border-right:1px solid #9aaac0;border-bottom:1px solid #9aaed0"></div>
<div class="t" style="left:1564px;top:632.3px;font-size:10.5px;color:#111">125.44</div>
<div class="a" style="left:1562px;top:651px;width:275px;height:24px;background:#88a8d6;border-top:1px solid #7a8aa0;border-left:1px solid #7d8ea6;border-right:1px solid #9aaac0;border-bottom:1px solid #9aaed0"></div>
<div class="t" style="left:1564px;top:658.3px;font-size:10.5px;color:#111">123.02</div>
<div class="a" style="left:1562px;top:677px;width:275px;height:24px;background:#88a8d6;border-top:1px solid #7a8aa0;border-left:1px solid #7d8ea6;border-right:1px solid #9aaac0;border-bottom:1px solid #9aaed0"></div>
<div class="t" style="left:1564px;top:684.3px;font-size:10.5px;color:#111">48.16</div>
<div class="a" style="left:1562px;top:703px;width:275px;height:24px;background:#88a8d6;border-top:1px solid #7a8aa0;border-left:1px solid #7d8ea6;border-right:1px solid #9aaac0;border-bottom:1px solid #9aaed0"></div>
<div class="t" style="left:1564px;top:710.3px;font-size:10.5px;color:#111">0.00</div>
<div class="a" style="left:1523px;top:734px;width:314px;height:20px;background:linear-gradient(#d9dbf3,#d3d5f0);border:1px solid #8e8e9e"></div>
<div class="t" style="left:1528px;top:739px;font-size:11.7px;font-weight:bold;color:#0d1522">Verschiedenes</div>
<svg class="a" style="left:1821px;top:740px" width="11" height="7"><path d="M0.5,6 L5.5,1 L10.5,6Z" fill="#111"/></svg>
<div class="a" style="left:1523px;top:754px;width:314px;height:125px;background:#ebebeb;border-left:1px solid #cfcfcf;border-bottom:1px solid #d8d8d8"></div>
<div class="a" style="left:1562px;top:767px;width:275px;height:20px;background:#fff;border:1px solid #8a8a8a;border-bottom-color:#7a7a7a"></div>
<div class="a" style="left:1820px;top:767px;width:17px;height:20px;background:#cfcfcf;border:1px solid #777"></div>
<svg class="a" style="left:1823px;top:774px" width="11" height="7"><path d="M1,1 L5.5,5 L10,1" fill="none" stroke="#555" stroke-width="1.2"/></svg>
<div class="t" style="left:1564px;top:772.3px;font-size:10.5px;color:#111">Ja</div>
<div class="a" style="left:1562px;top:789px;width:275px;height:20px;background:#fff;border:1px solid #8a8a8a;border-bottom-color:#7a7a7a"></div>
<div class="a" style="left:1820px;top:789px;width:17px;height:20px;background:#cfcfcf;border:1px solid #777"></div>
<svg class="a" style="left:1823px;top:796px" width="11" height="7"><path d="M1,1 L5.5,5 L10,1" fill="none" stroke="#555" stroke-width="1.2"/></svg>
<div class="t" style="left:1564px;top:794.3px;font-size:10.5px;color:#111">1:1</div>
<div class="a" style="left:1562px;top:811px;width:275px;height:20px;background:#fff;border:1px solid #8a8a8a;border-bottom-color:#7a7a7a"></div>
<div class="a" style="left:1820px;top:811px;width:17px;height:20px;background:#cfcfcf;border:1px solid #777"></div>
<svg class="a" style="left:1823px;top:818px" width="11" height="7"><path d="M1,1 L5.5,5 L10,1" fill="none" stroke="#555" stroke-width="1.2"/></svg>
<div class="t" style="left:1564px;top:816.3px;font-size:10.5px;color:#111">Ja</div>
<div class="a" style="left:1562px;top:833px;width:275px;height:20px;background:#fff;border:1px solid #8a8a8a;border-bottom-color:#7a7a7a"></div>
<div class="a" style="left:1820px;top:833px;width:17px;height:20px;background:#cfcfcf;border:1px solid #777"></div>
<svg class="a" style="left:1823px;top:840px" width="11" height="7"><path d="M1,1 L5.5,5 L10,1" fill="none" stroke="#555" stroke-width="1.2"/></svg>
<div class="t" style="left:1564px;top:838.3px;font-size:10.5px;color:#111">Ja</div>
<div class="a" style="left:1562px;top:855px;width:275px;height:24px;background:#88a8d6;border-top:1px solid #7a8aa0;border-left:1px solid #7d8ea6;border-right:1px solid #9aaac0;border-bottom:1px solid #9aaed0"></div>
<svg class="a" style="left:1530px;top:260px" width="26" height="620">
<path d="M3.5,19.3 L15,8.3 L20.6,14.6 L9,25.3Z" fill="none" stroke="#1f7fd0" stroke-width="2.2" stroke-linejoin="miter"/>
<path d="M8.5,19 L13,14.5 L15.5,17 L11.5,21" fill="none" stroke="#1f7fd0" stroke-width="1.8"/>
<g transform="translate(0,3)" stroke="#1a1a1a" stroke-width="1.1" fill="#f2a830"><path d="M3,41 L12,38 L21,41 L12,44Z"/><path d="M3,37 L12,34 L21,37 L12,40Z"/><path d="M3,33 L12,30 L21,33 L12,36Z"/></g>
<g transform="translate(0,0.8)" stroke="#3a3a3a" stroke-width="2"><path d="M3,55.5 H21"/><path d="M3,60.6 h4 M10,60.6 h4 M17,60.6 h4"/><path d="M3,65.7 h3 M8,65.7 h3 M13,65.7 h3 M18,65.7 h3"/><path d="M3,70.9 h7.5 M13.5,70.9 h7.5"/></g>
<path d="M3,84 L10,77 L19,86 L12,93Z" fill="#5f6670" stroke="#151515" stroke-width="1.4"/>
<path d="M5,76 L11,82" stroke="#151515" stroke-width="1.4"/><circle cx="11" cy="84" r="1.8" fill="#fff"/>
<path d="M17.5,85 Q21,89 20,91.5 Q18.5,94 16,92.5 Q14.5,90.5 17.5,85Z" fill="#1f6fc8" stroke="#123" stroke-width="0.6"/>
<g stroke="#2a2a2a" stroke-width="1.4"><path d="M4,102.5 h5 M12,102.5 h7"/><path d="M4,106.5 h3 M9,106.5 h8 M19,106.5 h1"/></g>
<g stroke="#2a2a2a" stroke-width="1.4" stroke-dasharray="1.4 1.8"><path d="M4,110.5 H21 M4,114.5 H21"/></g>
<g fill="#151515"><rect x="3" y="124" width="18" height="6.5"/><rect x="3" y="132" width="18" height="4"/><rect x="3" y="137.5" width="18" height="2.5"/><rect x="3" y="141" width="18" height="1.3"/></g>
<g fill="#6a6d76"><rect x="3" y="148" width="6" height="6.5"/><rect x="15" y="148" width="6" height="6.5"/><rect x="9" y="154.5" width="6" height="6.5"/><rect x="3" y="161" width="6" height="6.5"/><rect x="15" y="161" width="6" height="6.5"/></g><g fill="#e4e6f0"><rect x="9" y="148" width="6" height="6.5"/><rect x="3" y="154.5" width="6" height="6.5"/><rect x="15" y="154.5" width="6" height="6.5"/><rect x="9" y="161" width="6" height="6.5"/></g>
<g transform="translate(0,209)"><circle cx="11" cy="10" r="7.5" fill="none" stroke="#222" stroke-width="1.5"/><path d="M3,10 H19" stroke="#222" stroke-width="1.3"/><path d="M11,4 V16 M8.5,6.5 L11,4 L13.5,6.5 M8.5,13.5 L11,16 L13.5,13.5" fill="none" stroke="#1f7fd0" stroke-width="1.6"/></g>
<g transform="translate(0,231)"><rect x="2" y="1" width="10" height="3" fill="#1f5fa8"/><rect x="2" y="6" width="2.5" height="10" fill="#c03020"/><rect x="5" y="6" width="2.5" height="10" fill="#3a8a3a"/><rect x="8" y="6" width="2.5" height="10" fill="#1f7fd0"/><rect x="14" y="5" width="5" height="10" fill="#f0a020"/><path d="M2,17 H19 L17,19 H2Z" fill="#222"/><path d="M12,17 L15,15" stroke="#222" stroke-width="1"/></g>
<g transform="translate(0,253)"><rect x="2" y="2" width="3" height="14" fill="#c03020"/><rect x="6" y="2" width="3" height="14" fill="#3a8a3a"/><rect x="10" y="2" width="3" height="14" fill="#1f7fd0"/><rect x="15" y="5" width="5" height="10" fill="#f0a020"/><path d="M14,17 H20 L18,19 H14Z" fill="#222"/></g>
<g transform="translate(0,276)"><rect x="2" y="1" width="3" height="18" fill="#c03020"/><rect x="6" y="4" width="3" height="8" fill="#3a8a3a"/><path d="M10,10 L17,3 V10Z" fill="#1f7fd0"/><path d="M6,13 H20 M6,16 H20 M2,19.5 H20" stroke="#111" stroke-width="1.6"/></g>
<g transform="translate(0,344)" fill="none"><path d="M4.5,3 V11 M19,3 V11" stroke="#222" stroke-width="1"/><path d="M6,7 H17.5" stroke="#1f6fb0" stroke-width="1.3"/><path d="M8.5,4.8 L6,7 L8.5,9.2 M15,4.8 L17.5,7 L15,9.2" stroke="#1f6fb0" stroke-width="1.3"/></g>
<g transform="translate(0,369)" fill="none"><path d="M8,2.5 H15 M8,18.5 H15" stroke="#222" stroke-width="1"/><path d="M11.5,4 V17 M9.3,6.3 L11.5,4 L13.7,6.3 M9.3,14.7 L11.5,17 L13.7,14.7" stroke="#1f6fb0" stroke-width="1.4"/></g>
<g transform="translate(0,394)"><path d="M17,6 A8,8 0 1 0 13,17" fill="none" stroke="#222" stroke-width="1.4"/><circle cx="11" cy="10" r="2.2" fill="#d4a020" stroke="#333" stroke-width="0.7"/><text x="15" y="19" font-size="6" font-family="Liberation Sans" fill="#222">x</text></g>
<g transform="translate(0,420)"><path d="M17,6 A8,8 0 1 0 13,17" fill="none" stroke="#222" stroke-width="1.4"/><circle cx="11" cy="10" r="2.2" fill="#d4a020" stroke="#333" stroke-width="0.7"/><text x="15" y="19" font-size="6" font-family="Liberation Sans" fill="#222">y</text></g>
<g transform="translate(0,446)"><path d="M17,6 A8,8 0 1 0 13,17" fill="none" stroke="#222" stroke-width="1.4"/><circle cx="11" cy="10" r="2.2" fill="#d4a020" stroke="#333" stroke-width="0.7"/><text x="15" y="19" font-size="6" font-family="Liberation Sans" fill="#222">z</text></g>
<g transform="translate(0,507)"><rect x="1.5" y="0.5" width="19" height="19" fill="#fff" stroke="#1f7fd0" stroke-width="1.2"/><path d="M9,3 V14 H17 M9,14 L4,18" fill="none" stroke="#222" stroke-width="1.4"/><path d="M9,2 l-2.5,3 h5z M18,14 l-3,-2.5 v5z M3,19 l1,-4 l3,3z" fill="#222"/></g>
<g transform="translate(0,530)"><path d="M7,17 V7 Q7,3 11,3 Q15,3 15,7 V17 M7,11 H15" fill="none" stroke="#111" stroke-width="2.6"/><rect x="9.5" y="0" width="3" height="1.5" fill="#111"/></g>
<g transform="translate(0,552)"><path d="M6,5 V16 H16 M6,16 L2,19" fill="none" stroke="#222" stroke-width="1.4"/><path d="M6,3 l-2.5,3 h5z M18,16 l-3,-2.5 v5z" fill="#222"/><circle cx="17" cy="5" r="3.5" fill="#3a8a3a"/></g>
<g transform="translate(0,574)"><path d="M6,5 V16 H16 M6,16 L2,19" fill="none" stroke="#222" stroke-width="1.4"/><path d="M6,3 l-2.5,3 h5z M18,16 l-3,-2.5 v5z" fill="#222"/><text x="10" y="8" font-size="7" font-weight="bold" font-family="Liberation Mono" fill="#222">0.0</text></g>
<g transform="translate(0,598)"><path d="M6,5 V16 H16 M6,16 L2,19" fill="none" stroke="#222" stroke-width="1.4"/><path d="M6,3 l-2.5,3 h5z M18,16 l-3,-2.5 v5z" fill="#222"/><text x="12" y="9" font-size="9" font-weight="bold" font-family="Liberation Mono" fill="#222">A</text></g>
</svg>
<div class="a" style="left:1875px;top:162px;width:24px;height:838px;background:#9c9c9c;border:1px solid #6e6e6e"></div>
<div class="a" style="left:1886px;top:206px;width:12px;height:680px;background:#9f9f9f"></div>
<svg class="a" style="left:1879px;top:166px" width="16" height="40"><path d="M3,2.5 L10.5,10 M10.5,2.5 L3,10" stroke="#111" stroke-width="1.5"/><path d="M3.5,25 H12.5 L11,27 V31 L13,34 H3 L5,31 V27Z" fill="#1e1e1e"/><path d="M8,34 V40" stroke="#333" stroke-width="1.3"/></svg>
<div class="t" style="left:1886px;top:934px;font-size:11.5px;font-weight:bold;color:#0d1522;transform:translate(-50%,-50%) rotate(-90deg);transform-origin:center">Eigenschaften</div>
<svg class="a" style="left:1878px;top:977px" width="18" height="18"><rect x="2" y="2" width="3" height="6" fill="#f0a020"/><rect x="6" y="1" width="4" height="7" fill="#c03020"/><rect x="11" y="2" width="4" height="6" fill="#3a8a3a"/><path d="M2,10 h8 M2,13 h6" stroke="#1f5fa8" stroke-width="1"/><text x="10" y="17" font-size="8" font-family="Liberation Mono" font-weight="bold" fill="#222">A</text></svg>
<div class="a" style="left:1899px;top:162px;width:21px;height:838px;background:#e9e9e9"></div>
<div class="a" style="left:1899px;top:162px;width:20px;height:94px;background:#ffffff;border:1px solid #c9c9c9;border-left:none"></div>
<div class="t" style="left:1909px;top:209px;font-size:10.6px;color:#0a0a0a;transform:translate(-50%,-50%) rotate(-90deg)">Eigenschaften</div>
<div class="a" style="left:1899px;top:256px;width:20px;height:45px;background:#e4e4e4;border:1px solid #c9c9c9;border-left:none"></div>
<div class="t" style="left:1909px;top:276.8px;font-size:10.3px;color:#0a0a0a;transform:translate(-50%,-50%) rotate(-90deg)">Start</div>
<div class="a" style="left:1899px;top:301px;width:20px;height:125px;background:#e4e4e4;border:1px solid #c9c9c9;border-left:none"></div>
<div class="t" style="left:1909px;top:368.3px;font-size:9.7px;color:#0a0a0a;transform:translate(-50%,-50%) rotate(-90deg)">3D CONTENTCENTRAL</div>
<div class="a" style="left:1899px;top:426px;width:20px;height:85px;background:#e4e4e4;border:1px solid #c9c9c9;border-left:none"></div>
<div class="t" style="left:1909px;top:472.5px;font-size:10.3px;color:#0a0a0a;transform:translate(-50%,-50%) rotate(-90deg)">HomeByMe</div>
<div class="a" style="left:1899px;top:511px;width:20px;height:110px;background:#e4e4e4;border:1px solid #c9c9c9;border-left:none"></div>
<div class="t" style="left:1909px;top:567.3px;font-size:10.4px;color:#0a0a0a;transform:translate(-50%,-50%) rotate(-90deg)">G-code-Generator</div>
<div class="a" style="left:1899px;top:621px;width:20px;height:142px;background:#e4e4e4;border:1px solid #c9c9c9;border-left:none"></div>
<div class="t" style="left:1909px;top:693.2px;font-size:10.4px;color:#0a0a0a;transform:translate(-50%,-50%) rotate(-90deg)">Konstruktionsressourcen</div>
<div class="a" style="left:1899px;top:763px;width:20px;height:100px;background:#e4e4e4;border:1px solid #c9c9c9;border-left:none"></div>
<div class="t" style="left:1909px;top:815.6px;font-size:10.5px;color:#0a0a0a;transform:translate(-50%,-50%) rotate(-90deg)">Werkzeugmatrix</div>
<!-- layout tabs -->
<div class="a" style="left:0;top:985px;width:1508px;height:15px;background:#eeeeee"></div>
<div class="a" style="left:0;top:999px;width:1508px;height:2px;background:#fafafa"></div>
<svg class="a" style="left:0;top:984px" width="240" height="17">
<path d="M61,1 H131 L126,12 Q124.5,14.5 121.5,14.5 H70.5 Q67.5,14.5 66.5,12Z" fill="#b1b1b1"/><path d="M61,1 L66.5,12 Q67.5,14.5 70.5,14.5 H121.5 Q124.5,14.5 126,12 L131,1" fill="none" stroke="#222" stroke-width="1"/>
<path d="M131,1 H201 L196,12 Q194.5,14.5 191.5,14.5 H140.5 Q137.5,14.5 136.5,12Z" fill="#b1b1b1"/><path d="M131,1 L136.5,12 Q137.5,14.5 140.5,14.5 H191.5 Q194.5,14.5 196,12 L201,1" fill="none" stroke="#222" stroke-width="1"/>
<path d="M0.5,1 L5,12 Q6,14.5 9,14.5 H52 Q55,14.5 56,12 L61,1" fill="#fdfdfd" stroke="#222" stroke-width="1.1"/>
<rect x="208.5" y="2.5" width="21" height="11" fill="#e6e6e6" stroke="#8a8a8a"/>
<path d="M219,4.5 V11.5 M215.5,8 H222.5" stroke="#222" stroke-width="1.4"/>
</svg>
<div class="t" style="left:12px;top:987.5px;font-size:11.5px;font-weight:bold;color:#0d1522">Modell</div>
<div class="t" style="left:75px;top:987.5px;font-size:11px;color:#0f1a35">Layout1</div>
<div class="t" style="left:145px;top:987.5px;font-size:11px;color:#0f1a35">Layout2</div>
<!-- command bar -->
<div class="a" style="left:0;top:1001px;width:1920px;height:28px;background:linear-gradient(90deg,#a2a2a2,#9a9a9a 50%,#9e9e9e);border-top:3px solid #5e5e5e;border-bottom:2px solid #6a6a6a;border-left:1px solid #6a6a6a;border-right:1px solid #6a6a6a"></div>
<div class="t" style="left:4px;top:1011px;font-size:11.8px;font-weight:bold;color:#0d1522">Befehlsfenster</div>
<svg class="a" style="left:1878px;top:1009px" width="40" height="14">
<rect x="2.5" y="4.5" width="7" height="6" fill="none" stroke="#111" stroke-width="1.3"/><path d="M5,4.5 V2 H12 V8 H9.5" fill="none" stroke="#111" stroke-width="1.3"/>
<path d="M25,2 L33,10 M33,2 L25,10" stroke="#111" stroke-width="1.8"/>
</svg>
<!-- command line -->
<div class="a" style="left:0;top:1029px;width:1920px;height:17px;background:#fdfdfd"></div>
<div class="a" style="left:5px;top:1035px;width:2px;height:1px;background:#333"></div>
<div class="a" style="left:5px;top:1040px;width:2px;height:1px;background:#333"></div>
<!-- status bar -->
<div class="a" style="left:0;top:1046px;width:1920px;height:32px;background:#ececec"></div>
<div class="a" style="left:0;top:1077px;width:1920px;height:3px;background:#222"></div>
<div class="t" style="left:3px;top:1058.5px;font-size:11.4px;color:#111">DraftSight 2020 x64</div>
<div class="a" style="left:688px;top:1051px;width:25px;height:24px;background:#d9d9d9;border:1px solid #a6a6a6"></div>
<div class="a" style="left:722px;top:1051px;width:25px;height:24px;background:#d9d9d9;border:1px solid #a6a6a6"></div>
<div class="a" style="left:755px;top:1051px;width:25px;height:24px;background:#d9d9d9;border:1px solid #a6a6a6"></div>
<div class="a" style="left:788px;top:1051px;width:25px;height:24px;background:#d9d9d9;border:1px solid #a6a6a6"></div>
<div class="a" style="left:823px;top:1051px;width:25px;height:24px;background:#d9d9d9;border:1px solid #a6a6a6"></div>
<div class="a" style="left:856px;top:1051px;width:25px;height:24px;background:#cde0f4;border:1px solid #2a5f9e"></div>
<div class="a" style="left:889px;top:1051px;width:25px;height:24px;background:#cde0f4;border:1px solid #2a5f9e"></div>
<div class="a" style="left:922px;top:1051px;width:25px;height:24px;background:#cde0f4;border:1px solid #2a5f9e"></div>
<div class="a" style="left:955px;top:1051px;width:25px;height:24px;background:#cde0f4;border:1px solid #2a5f9e"></div>
<svg class="a" style="left:680px;top:1046px" width="310" height="32">
<g transform="translate(8,5)"><path d="M9,5 Q9,2 12,2 Q15,2 15,5 V10 H9Z" fill="#555"/><rect x="10" y="10" width="4" height="5" fill="#555"/><ellipse cx="17" cy="17" rx="4" ry="2.5" fill="#f0a020" stroke="#555" stroke-width="0.6"/><path d="M14,17 H20" stroke="#555" stroke-width="0.8"/></g>
<g transform="translate(42,5)"><path d="M4,5 H21 M4,10 H21 M4,15 H21 M7,2 V21 M12,2 V21 M17,2 V21" stroke="#bbb" stroke-width="1"/><circle cx="6.5" cy="7" r="2.2" fill="#d02020"/><path d="M9,8 L9,21 L12,18 L15,23 L17,22 L14,17 L18,17Z" fill="#fff" stroke="#222" stroke-width="1.1"/></g>
<g transform="translate(75,5)" stroke="#111" stroke-width="1.6"><path d="M4,6 H21 M4,10 H21 M4,14 H21 M4,18 H21 M7,3 V21 M11,3 V21 M15,3 V21 M19,3 V21"/></g>
<g transform="translate(108,5)" fill="none" stroke="#222" stroke-width="1.3"><path d="M7,6 L17,4 V21 L7,18Z"/><path d="M3,12 H21" stroke-dasharray="3 1.5 1 1.5" stroke-width="1"/></g>
<g transform="translate(143,5)" fill="none"><circle cx="10" cy="13" r="6" stroke="#222" stroke-width="1.3"/><path d="M10,13 L17,5 M10,13 L17,20" stroke="#1f7fd0" stroke-width="1"/><path d="M18,13 H22" stroke="#1f7fd0" stroke-width="1.2"/><path d="M10,9 L12,13 L9,14" stroke="#1f7fd0" stroke-width="1.2"/></g>
<g transform="translate(176,5)"><text x="3" y="13" font-size="10" font-family="Liberation Sans" fill="#1f6fc8">E</text><path d="M18,3 V12" stroke="#222" stroke-dasharray="2 1.5"/><path d="M3,20 H19" stroke="#222" stroke-dasharray="3 1"/><path d="M9,5 L9,18 L12,15 L15,20 L17,19 L14,14 L18,14Z" fill="#fff" stroke="#222" stroke-width="1.1"/><circle cx="19.5" cy="19" r="2.5" fill="#d02020"/></g>
<g transform="translate(209,5)"><text x="3" y="13" font-size="10" font-family="Liberation Sans" fill="#1f6fc8">E</text><path d="M11,7 H17 M10,11 H18 M9,15 H19 M7,19 H21 M14,5 V21" stroke="#333" stroke-width="1.3"/></g>
<g transform="translate(242,5)" fill="none" stroke="#222" stroke-width="1.4" stroke-dasharray="2.5 1.5"><path d="M3,3 H14 L21,10 V21 H3Z"/><path d="M6,6 H13 L18,11 V18 H6Z" stroke-dasharray="none" stroke-width="1.2"/></g>
<g transform="translate(275,5)"><path d="M7,8 H19 V21 H7Z" fill="none" stroke="#222" stroke-width="1.2"/><path d="M7,14 H19" stroke="#222"/><rect x="12" y="2" width="5" height="4" fill="#1f6fc8"/><rect x="2" y="13" width="4" height="5" fill="#1f6fc8"/><path d="M4,4 H9 M20,4 V6" stroke="#222" stroke-dasharray="2 1"/></g>
</svg>
<div class="a" style="left:988px;top:1053px;width:104px;height:19px;background:#dadada;border:1px solid #a0a0a0"></div>
<div class="t" style="left:993px;top:1057.5px;font-size:11.1px;color:#111">Dynamisches BKS</div>
<div class="a" style="left:1102px;top:1053px;width:101px;height:20px;background:#dcdcdc;border:1px solid #9a9a9a"></div>
<div class="t" style="left:1106px;top:1058px;font-size:11.4px;color:#111">Beschriftung</div>
<svg class="a" style="left:1185px;top:1059px" width="14" height="9"><path d="M0.5,0.5 H13 L6.75,8Z" fill="#111"/></svg>
<div class="t" style="left:1210px;top:1058px;font-size:11px;color:#111">(1:1)</div>
<div class="t" style="left:1240px;top:1058px;font-size:10.8px;color:#111">(142.06,46.49,0.00)</div>
</body></html>
